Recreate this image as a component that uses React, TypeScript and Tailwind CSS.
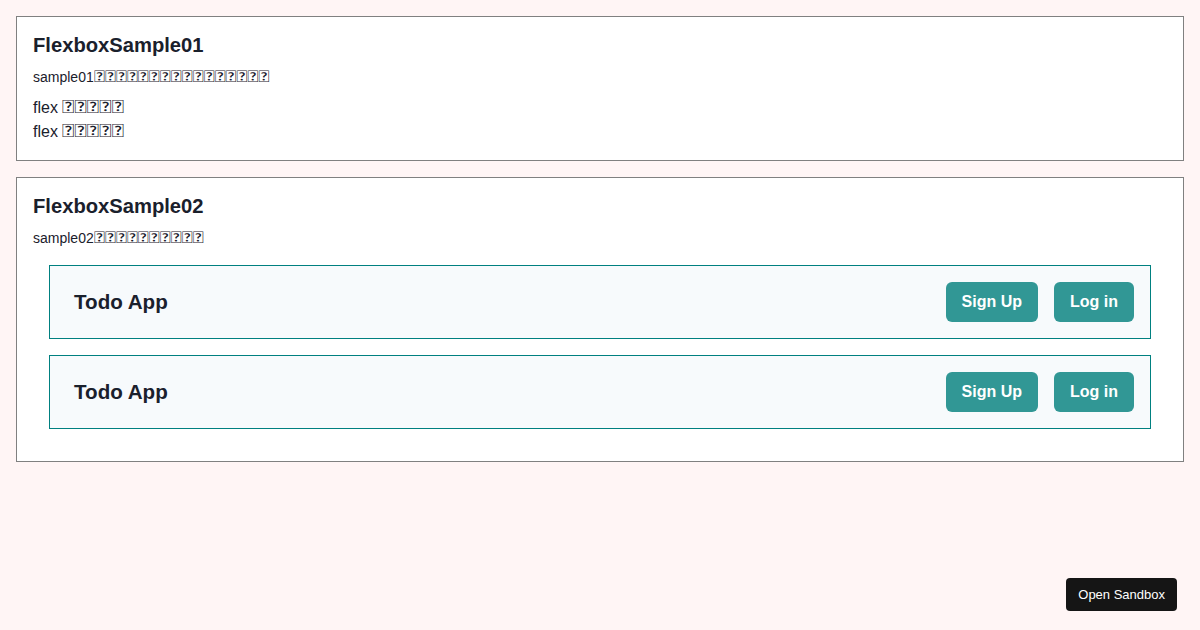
import React from "react";

const T = (n: number) => "\uE000".repeat(n);

function Tofu({ n, small }: { n: number; small?: boolean }) {
  return small ? (
    <span className="inline-block origin-left scale-x-[1.31] font-['Lato',sans-serif] text-[15.75px] leading-none">{T(n)}</span>
  ) : (
    <span className="inline-block origin-left scale-x-[1.3] font-['Lato',sans-serif] text-[18px] leading-none">{T(n)}</span>
  );
}

function Header() {
  return (
    <div className="m-4 flex items-center justify-between border border-[#008080] bg-[#f7fafc] py-4 pl-6 pr-4">
      <h3 className="text-[20.6px] font-bold leading-6 text-[#1a202c]">Todo App</h3>
      <div className="flex gap-4">
        <button className="h-10 rounded-md bg-[#319795] px-4 text-base font-bold text-white">Sign Up</button>
        <button className="h-10 rounded-md bg-[#319795] px-4 text-base font-bold text-white">Log in</button>
      </div>
    </div>
  );
}

export default function App() {
  return (
    <div className="min-h-screen bg-[#fff5f5] p-4 font-['Liberation_Sans',Arial,sans-serif] text-[#1a202c]">
      <div className="flex flex-col gap-4">
        <section className="border border-[#808080] bg-white p-4">
          <h2 className="text-[20.2px] font-bold leading-6">FlexboxSample01</h2>
          <p className="mt-[10px] text-sm leading-[21px]">
            sample01
            <Tofu n={16} small />
          </p>
          <div className="mt-2 text-base leading-6">
            <div>
              flex <Tofu n={5} />
            </div>
            <div>
              flex <Tofu n={5} />
            </div>
          </div>
        </section>
        <section className="border border-[#808080] bg-white p-4">
          <h2 className="text-[20.2px] font-bold leading-6">FlexboxSample02</h2>
          <p className="mt-[10px] text-sm leading-[21px]">
            sample02
            <Tofu n={10} small />
          </p>
          <div className="mt-[2px]">
            <Header />
            <Header />
          </div>
        </section>
      </div>
      <button className="fixed bottom-[19px] right-[23px] h-[33px] rounded bg-[#151515] px-3 text-[13px] text-white">
        Open Sandbox
      </button>
    </div>
  );
}
